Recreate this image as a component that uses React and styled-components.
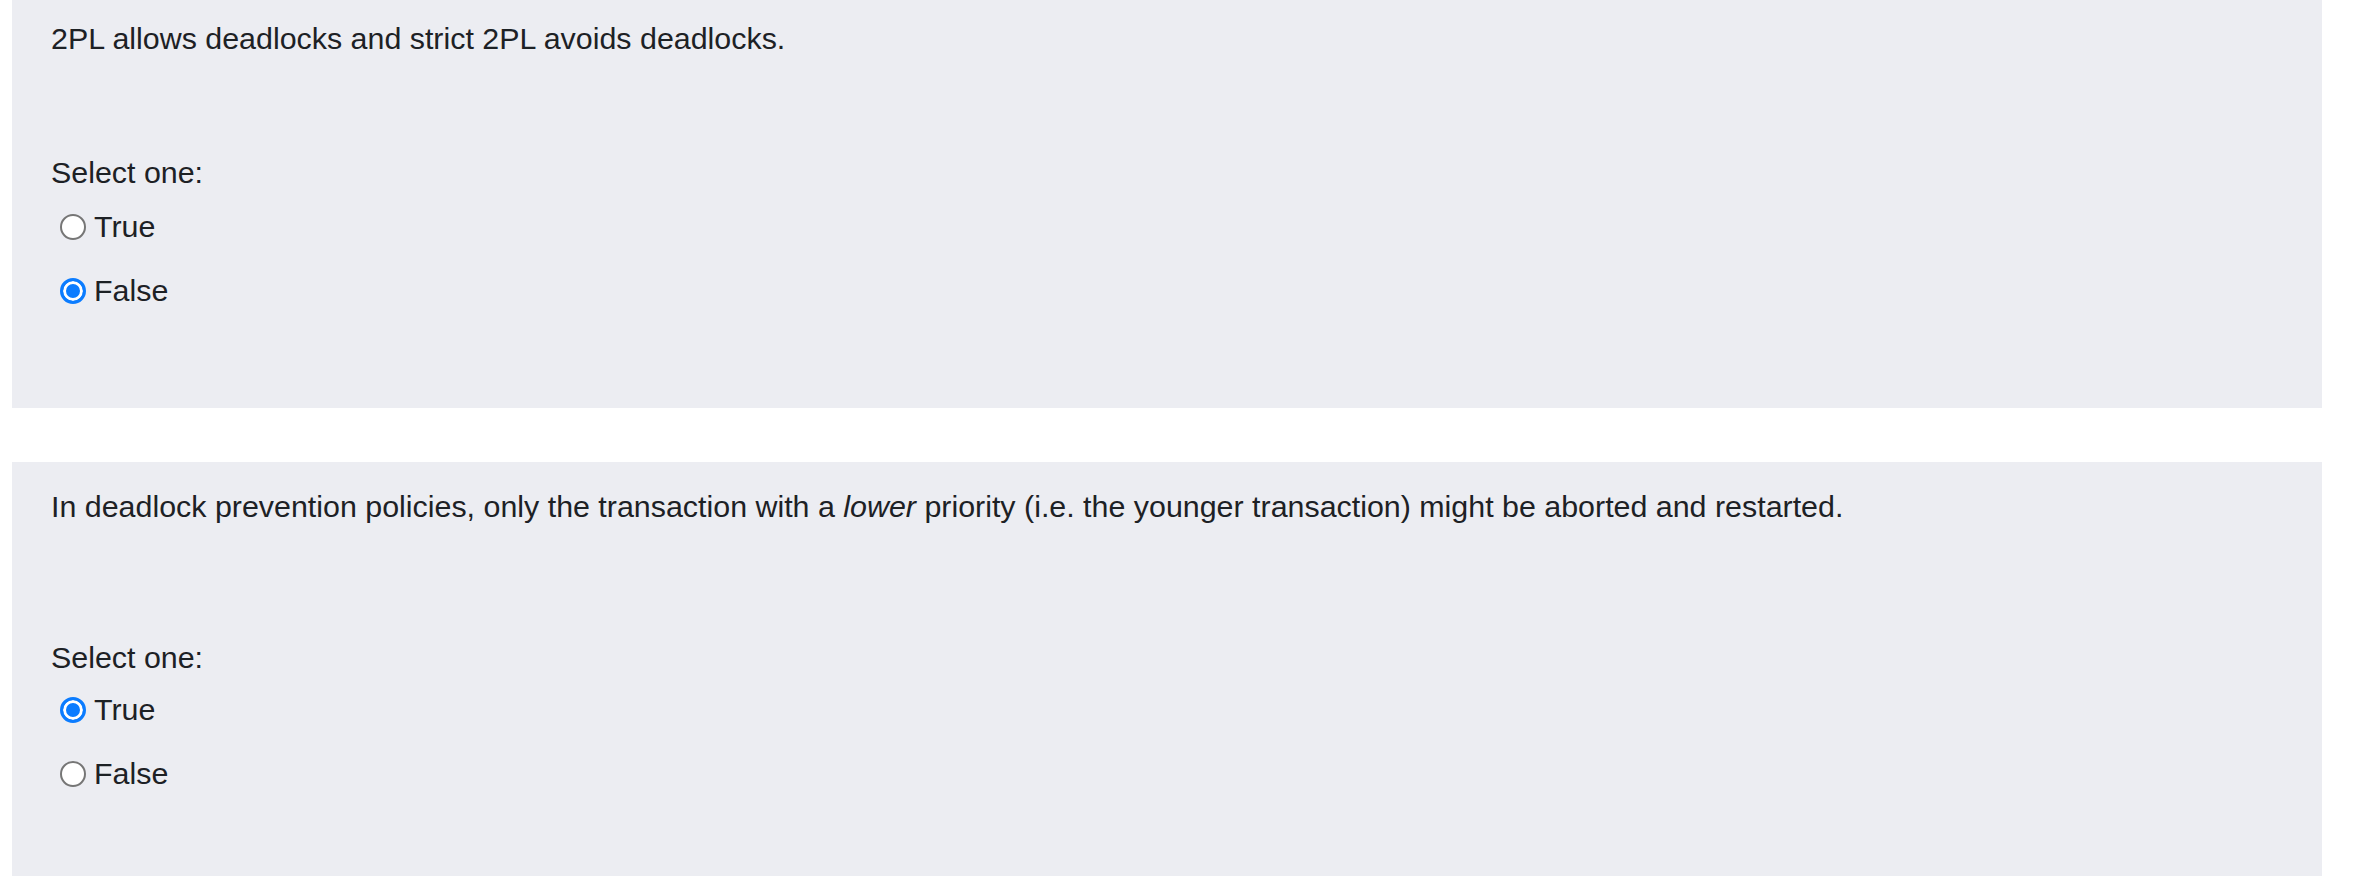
import React from 'react';
import styled, { createGlobalStyle } from 'styled-components';

const GlobalStyle = createGlobalStyle`
    html, body {
        margin: 0;
        padding: 0;
        background: #ffffff;
    }
    body {
        font-family: "Liberation Sans", Arial, Helvetica, sans-serif;
        font-size: 30.4px;
        color: #1d2125;
        overflow: hidden;
    }
`;

const Page = styled.div`
    margin-top: -6px;
    padding: 0 34px 0 12px;
    display: flex;
    flex-direction: column;
    gap: 54px;
`;

const Card = styled.div`
    background: #ecedf2;
    height: 414px;
    box-sizing: border-box;
    padding: 22px 0 0 39px;
    display: flex;
    flex-direction: column;
`;

const QuestionText = styled.div`
    line-height: 45px;
    margin-bottom: ${props => props.$gap}px;
`;

const Prompt = styled.div`
    line-height: 45px;
    margin-bottom: ${props => props.$after}px;
`;

const Answers = styled.div`
    display: flex;
    flex-direction: column;
    gap: ${props => props.$spacing - 45}px;
    padding-left: 9px;
`;

const Option = styled.label`
    display: flex;
    align-items: center;
    height: 45px;
    gap: 8px;
`;

const Radio = styled.input.attrs({ type: 'radio' })`
    appearance: none;
    -webkit-appearance: none;
    margin: 0;
    width: 26px;
    height: 26px;
    border-radius: 50%;
    box-sizing: border-box;
    border: 2px solid #767676;
    background: #ffffff;
    flex: none;

    &:checked {
        border: 3px solid #0b7cff;
        background: #0b7cff;
        box-shadow: inset 0 0 0 3px #ffffff;
    }
`;

const questions = [
    {
        id: 'q1',
        text: <>2PL allows deadlocks and strict 2PL avoids deadlocks.</>,
        answer: 'False',
        gap: 89,
        after: 9,
        spacing: 64,
    },
    {
        id: 'q2',
        text: (
            <>
                In deadlock prevention policies, only the transaction with a <em>lower</em> priority
                (i.e. the younger transaction) might be aborted and restarted.
            </>
        ),
        answer: 'True',
        gap: 106,
        after: 7,
        spacing: 64,
    },
];

const Question = ({ q }) => (
    <Card>
        <QuestionText $gap={q.gap}>{q.text}</QuestionText>
        <Prompt $after={q.after}>Select one:</Prompt>
        <Answers $spacing={q.spacing}>
            {['True', 'False'].map(choice => (
                <Option key={choice}>
                    <Radio name={q.id} defaultChecked={choice === q.answer} />
                    {choice}
                </Option>
            ))}
        </Answers>
    </Card>
);

const App = () => {
    return (
        <>
            <GlobalStyle />
            <Page>
                {questions.map(q => (
                    <Question key={q.id} q={q} />
                ))}
            </Page>
        </>
    );
};

export default App;
